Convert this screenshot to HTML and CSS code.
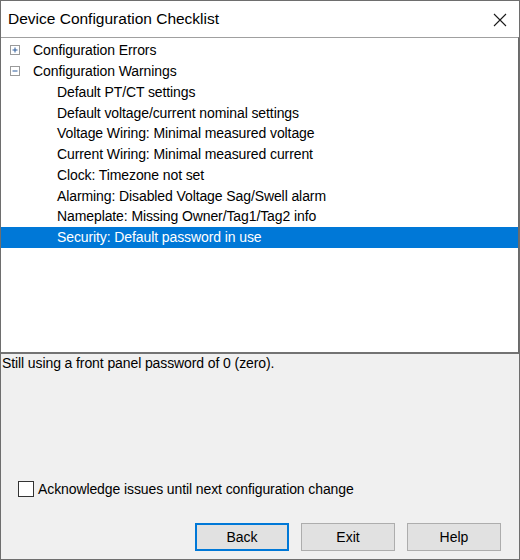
FILE: index.html
```html
<!DOCTYPE html>
<html>
<head>
<meta charset="utf-8">
<link rel="stylesheet" href="styles.css">
</head>
<body>
<div class="window">
  <div class="titlebar">
    <span class="title">Device Configuration Checklist</span>
    <span class="close">
      <svg width="14" height="14" viewBox="0 0 14 14"><path d="M1 1 L13 13 M13 1 L1 13" stroke="#1a1a1a" stroke-width="1.1" fill="none"/></svg>
    </span>
  </div>
  <div class="tree">
    <div class="row parent">
      <span class="exp"><svg width="10" height="10" viewBox="0 0 10 10"><rect x="0.5" y="0.5" width="9" height="9" fill="#fff" stroke="#9a9a9a"/><path d="M2.5 5 H7.5 M5 2.5 V7.5" stroke="#2a5a9a"/></svg></span>
      <span class="label">Configuration Errors</span>
    </div>
    <div class="row parent">
      <span class="exp"><svg width="10" height="10" viewBox="0 0 10 10"><rect x="0.5" y="0.5" width="9" height="9" fill="#fff" stroke="#9a9a9a"/><path d="M2.5 5 H7.5" stroke="#2a5a9a"/></svg></span>
      <span class="label">Configuration Warnings</span>
    </div>
    <div class="row child"><span class="label">Default PT/CT settings</span></div>
    <div class="row child"><span class="label">Default voltage/current nominal settings</span></div>
    <div class="row child"><span class="label">Voltage Wiring: Minimal measured voltage</span></div>
    <div class="row child"><span class="label">Current Wiring: Minimal measured current</span></div>
    <div class="row child"><span class="label">Clock: Timezone not set</span></div>
    <div class="row child"><span class="label">Alarming: Disabled Voltage Sag/Swell alarm</span></div>
    <div class="row child"><span class="label">Nameplate: Missing Owner/Tag1/Tag2 info</span></div>
    <div class="row child selected"><span class="label">Security: Default password in use</span></div>
  </div>
  <div class="status">Still using a front panel password of 0 (zero).</div>
  <label class="ack"><span class="box"></span><span>Acknowledge issues until next configuration change</span></label>
  <div class="buttons">
    <button class="btn default">Back</button>
    <button class="btn">Exit</button>
    <button class="btn">Help</button>
  </div>
</div>
</body>
</html>
```
FILE: styles.css
```css
html, body {
  margin: 0;
  padding: 0;
  background: #f0f0f0;
}
.window {
  width: 520px;
  height: 560px;
  box-sizing: border-box;
  border: 1px solid #6e6e6e;
  background: #f0f0f0;
  display: flex;
  flex-direction: column;
  font-family: "Liberation Sans", Arial, sans-serif;
  font-size: 14px;
  letter-spacing: -0.1px;
  color: #000;
}
.titlebar {
  height: 36px;
  background: #fff;
  display: flex;
  align-items: center;
  justify-content: space-between;
  padding: 0 0 0 7px;
  flex: none;
}
.title {
  font-family: "Liberation Sans", Arial, sans-serif;
  font-size: 15.5px;
  letter-spacing: 0;
  color: #000;
  margin-top: -1px;
}
.close {
  display: flex;
  align-items: center;
  margin-right: 12px;
  margin-top: 1px;
}
.close svg {
  display: block;
}
.tree {
  height: 312px;
  flex: none;
  background: #fff;
  border-top: 1px solid #a0a0a0;
  border-right: 1px solid #6a6a6a;
  border-bottom: 2px solid #737373;
  padding-top: 2px;
}
.row {
  height: 20.75px;
  display: flex;
  align-items: center;
  white-space: nowrap;
}
.row.parent {
  padding-left: 9px;
}
.exp {
  width: 23px;
  display: flex;
  align-items: center;
}
.exp svg {
  display: block;
}
.row.child {
  padding-left: 56px;
}
.row.selected {
  background: #0078d7;
  color: #fff;
}
.status {
  padding: 1px 0 0 1px;
  height: 122px;
  flex: none;
}
.ack {
  display: flex;
  align-items: center;
  padding-left: 17px;
  height: 24px;
  flex: none;
}
.box {
  width: 14px;
  height: 14px;
  border: 1px solid #333;
  background: #fff;
  margin-right: 4px;
  flex: none;
}
.buttons {
  display: flex;
  justify-content: flex-end;
  gap: 12px;
  padding: 22px 18px 0 0;
}
.btn {
  width: 94px;
  height: 28px;
  box-sizing: border-box;
  background: #e1e1e1;
  border: 1px solid #adadad;
  font-family: "Liberation Sans", Arial, sans-serif;
  font-size: 14px;
  color: #000;
  padding: 0;
}
.btn.default {
  border: 2px solid #0078d7;
}
```
